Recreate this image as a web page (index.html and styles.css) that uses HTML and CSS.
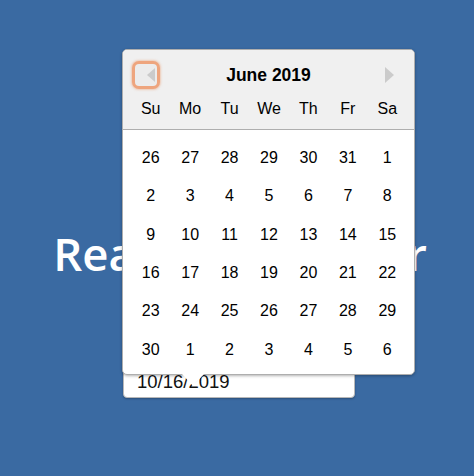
FILE: index.html
```html
<!DOCTYPE html>
<html lang="en">
<head>
<meta charset="utf-8">
<title>React Datepicker</title>
<link rel="stylesheet" href="styles.css">
</head>
<body>
<main class="page">
  <h1 class="title">React Datepicker</h1>
  <div class="field">
    <div class="input">10/16/2019</div>
    <div class="picker">
      <div class="picker-header">
        <div class="nav">
          <div class="nav-prev-cell"><button class="nav-btn prev" aria-label="Previous month"><span class="tri-left"></span></button></div>
          <div class="month">June 2019</div>
          <div class="nav-next-cell"><button class="nav-btn next" aria-label="Next month"><span class="tri-right"></span></button></div>
        </div>
        <div class="dow">
          <span>Su</span><span>Mo</span><span>Tu</span><span>We</span><span>Th</span><span>Fr</span><span>Sa</span>
        </div>
      </div>
      <div class="days">
        <span>26</span><span>27</span><span>28</span><span>29</span><span>30</span><span>31</span><span>1</span>
        <span>2</span><span>3</span><span>4</span><span>5</span><span>6</span><span>7</span><span>8</span>
        <span>9</span><span>10</span><span>11</span><span>12</span><span>13</span><span>14</span><span>15</span>
        <span>16</span><span>17</span><span>18</span><span>19</span><span>20</span><span>21</span><span>22</span>
        <span>23</span><span>24</span><span>25</span><span>26</span><span>27</span><span>28</span><span>29</span>
        <span>30</span><span>1</span><span>2</span><span>3</span><span>4</span><span>5</span><span>6</span>
      </div>
      <div class="triangle"></div>
    </div>
  </div>
</main>
</body>
</html>
```

FILE: styles.css
```css
html, body {
  margin: 0;
  padding: 0;
  background: #3a6aa2;
  height: 100%;
  overflow: hidden;
}

.page {
  padding-top: 229px;
}

.title {
  margin: 0;
  font-family: "Open Sans", "Noto Sans", sans-serif;
  font-weight: 600;
  font-size: 45.5px;
  line-height: 48px;
  color: #ffffff;
  text-align: center;
  padding-left: 6px;
}

.field {
  position: relative;
  margin: 88px 0 0 123px;
  width: 232px;
}

.input {
  box-sizing: border-box;
  height: 33px;
  background: #ffffff;
  border: 1px solid #b8b8b8;
  border-radius: 4px;
  padding-left: 13px;
  font-family: "Liberation Sans", Arial, sans-serif;
  font-size: 18.5px;
  line-height: 32px;
  color: #111;
  box-shadow: 0 1px 2px rgba(0, 0, 0, 0.25);
}

.picker {
  position: absolute;
  left: -1px;
  bottom: 23px;
  width: 293px;
  box-sizing: border-box;
  background: #ffffff;
  border: 1px solid #aeaeae;
  border-radius: 5px;
  box-shadow: 0 1px 3px rgba(0, 0, 0, 0.3);
  font-family: "Liberation Sans", Arial, sans-serif;
  color: #000;
}

.picker-header {
  background: #f0f0f0;
  border-bottom: 1px solid #aeaeae;
  border-radius: 4px 4px 0 0;
  padding-bottom: 11px;
}

.nav {
  display: grid;
  grid-template-columns: 1fr auto 1fr;
  align-items: center;
  height: 50px;
}

.month {
  font-weight: 700;
  font-size: 17.5px;
  line-height: 20px;
}

.nav-prev-cell {
  padding-left: 12px;
  display: flex;
}

.nav-next-cell {
  display: flex;
  justify-content: flex-end;
  padding-right: 20px;
}

.nav-btn {
  border: 0;
  padding: 0;
  margin: 0;
  background: transparent;
  display: flex;
  align-items: center;
}

.nav-btn.prev {
  width: 22px;
  height: 22px;
  border-radius: 4px;
  background: #ececec;
  box-shadow: 0 0 0 3px #eea57e, 0 0 2px 4px rgba(238, 165, 126, 0.5);
  justify-content: flex-end;
  padding-right: 2px;
  box-sizing: border-box;
}

.tri-left {
  width: 0;
  height: 0;
  border-top: 7px solid transparent;
  border-bottom: 7px solid transparent;
  border-right: 8px solid #cbcbcb;
}

.nav-btn.next {
  height: 22px;
}

.tri-right {
  width: 0;
  height: 0;
  border-top: 8px solid transparent;
  border-bottom: 8px solid transparent;
  border-left: 9px solid #cbcbcb;
}

.dow {
  display: grid;
  grid-template-columns: repeat(7, 1fr);
  padding: 0 7px 0 8px;
  font-size: 16px;
  line-height: 18px;
  text-align: center;
}

.days {
  display: grid;
  grid-template-columns: repeat(7, 1fr);
  grid-auto-rows: 38.4px;
  padding: 9px 7px 5px 8px;
  font-size: 16px;
  text-align: center;
  align-items: center;
}

.triangle {
  position: absolute;
  left: 59px;
  bottom: -12px;
  width: 0;
  height: 0;
  border-left: 11px solid transparent;
  border-right: 11px solid transparent;
  border-top: 12px solid #ffffff;
}
```
